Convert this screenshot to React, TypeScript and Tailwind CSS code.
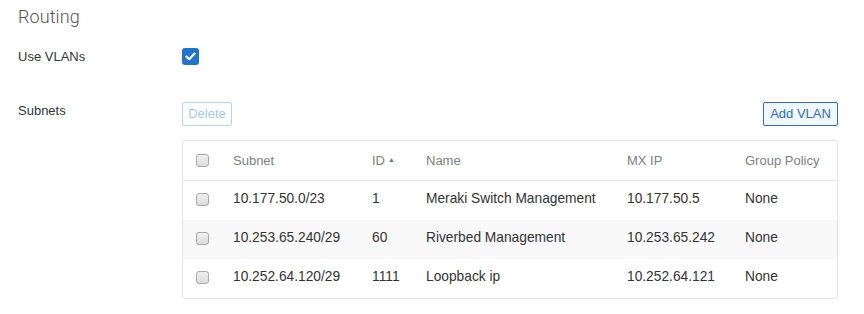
import React from "react";

const rows = [
  { subnet: "10.177.50.0/23", id: "1", name: "Meraki Switch Management", ip: "10.177.50.5", policy: "None" },
  { subnet: "10.253.65.240/29", id: "60", name: "Riverbed Management", ip: "10.253.65.242", policy: "None" },
  { subnet: "10.252.64.120/29", id: "1111", name: "Loopback ip", ip: "10.252.64.121", policy: "None" },
];

function SmallBox() {
  return (
    <span className="block w-[13px] h-[13px] rounded-[3px] border border-[#a9a9a9] bg-gradient-to-b from-[#f0f0f0] to-[#dcdcdc]" />
  );
}

export default function App() {
  return (
    <div className="w-[864px] h-[314px] bg-white text-[13px] text-[#333] font-['Liberation_Sans',Arial,sans-serif] pl-[18px] pr-[26px] pt-[5px]">
      <h2 className="text-[18px] leading-[24px] text-[#555] font-['Roboto',sans-serif] font-light tracking-[0.1px]">Routing</h2>
      <div className="flex items-center mt-[19px] h-[17px]">
        <div className="w-[164px]">Use VLANs</div>
        <span className="w-[17px] h-[17px] rounded-[3px] bg-[#1f74d0] flex items-center justify-center">
          <svg width="11" height="9" viewBox="0 0 11 9">
            <path d="M1.5 4.6 L4.2 7.2 L9.6 1.6" fill="none" stroke="white" strokeWidth="2.2" strokeLinecap="round" strokeLinejoin="round" />
          </svg>
        </span>
      </div>
      <div className="flex mt-[37px]">
        <div className="w-[164px] pt-[1px] leading-[16px]">Subnets</div>
        <div className="flex-1">
          <div className="flex justify-between h-[24px]">
            <button className="h-[24px] w-[50px] border border-[#b3d4f5] rounded-[2px] text-[#a6c9ee] text-[13px] leading-[20px]">Delete</button>
            <button className="h-[24px] w-[75px] border border-[#2a6fc2] rounded-[2px] bg-[#f2f7fd] text-[#2a6fc2] text-[13px] leading-[20px]">Add VLAN</button>
          </div>
          <div className="mt-[14px] border border-[#e5e5e5] rounded-[3px] overflow-hidden">
            <div className="grid grid-cols-[51px_139px_54px_201px_118px_1fr] items-center h-[40px] border-b border-[#e5e5e5] text-[#808080]">
              <div className="pl-[13px]"><SmallBox /></div>
              <div className="-ml-[1px]">Subnet</div>
              <div className="-ml-[1px] flex items-center">ID<span className="ml-[3px] text-[7px] text-[#777]">▲</span></div>
              <div className="-ml-[1px]">Name</div>
              <div className="-ml-[1px]">MX IP</div>
              <div className="-ml-[1px]">Group Policy</div>
            </div>
            {rows.map((r, i) => (
              <div key={r.id} className={`grid grid-cols-[51px_139px_54px_201px_118px_1fr] items-center h-[39px] pb-[3px] text-[13.75px] ${i === 1 ? "bg-[#f9f9f9]" : "bg-white"}`}>
                <div className="pl-[13px]"><SmallBox /></div>
                <div className="-ml-[1px]">{r.subnet}</div>
                <div className="-ml-[1px]">{r.id}</div>
                <div className="-ml-[1px]">{r.name}</div>
                <div className="-ml-[1px]">{r.ip}</div>
                <div className="-ml-[1px]">{r.policy}</div>
              </div>
            ))}
          </div>
        </div>
      </div>
    </div>
  );
}
